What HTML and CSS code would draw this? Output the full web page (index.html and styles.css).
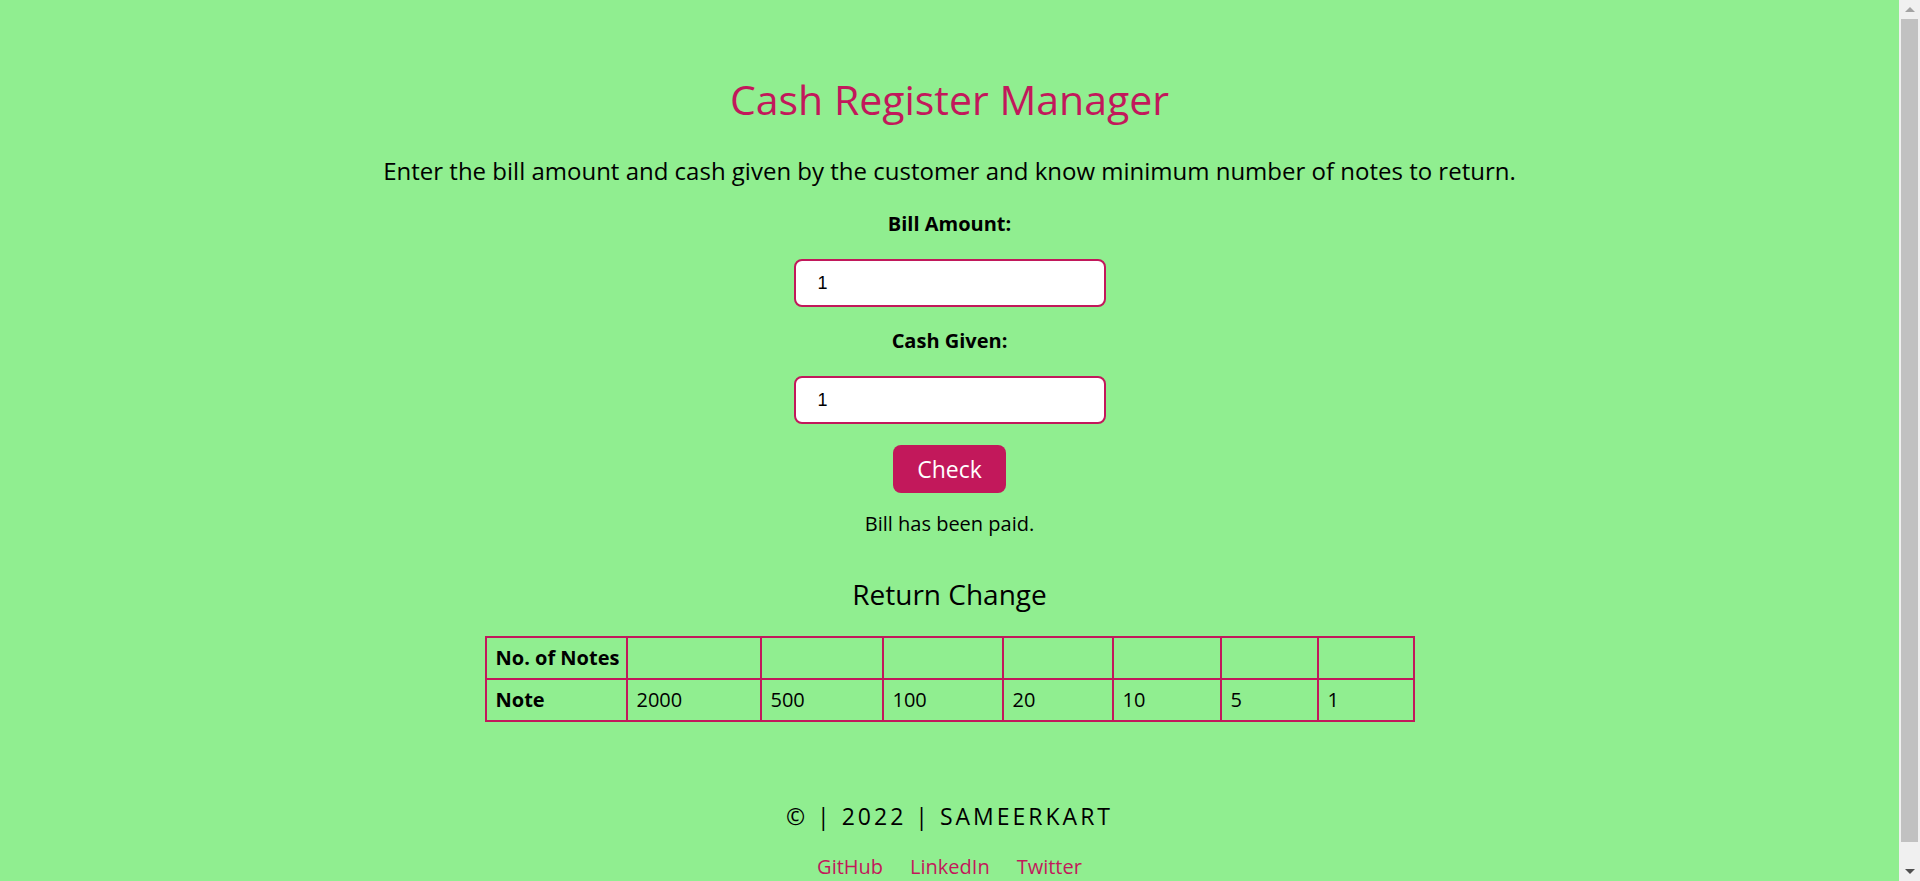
FILE: index.html
```html
<!DOCTYPE html>
<html lang="en">
<head>
    <meta charset="UTF-8">
    <meta name="viewport" content="width=device-width, initial-scale=1.0">
    <title>Cash Register Manager</title>
    <link rel="stylesheet" href="styles.css">
</head>
<body>
    <main class="container">
        <h1 class="title">Cash Register Manager</h1>
        <p class="intro">Enter the bill amount and cash given by the customer and know minimum number of notes to return.</p>

        <label class="label" for="bill-amount">Bill Amount:</label>
        <input class="input" id="bill-amount" type="number" value="1">

        <label class="label label-cash" for="cash-given">Cash Given:</label>
        <input class="input" id="cash-given" type="number" value="1">

        <button class="btn-check" id="check-button">Check</button>

        <p class="message" id="error-message">Bill has been paid.</p>

        <h2 class="sub-title">Return Change</h2>
        <table class="change-table">
            <colgroup>
                <col><col><col><col><col><col><col><col>
            </colgroup>
            <tr>
                <th>No. of Notes</th>
                <td class="no-of-notes"></td>
                <td class="no-of-notes"></td>
                <td class="no-of-notes"></td>
                <td class="no-of-notes"></td>
                <td class="no-of-notes"></td>
                <td class="no-of-notes"></td>
                <td class="no-of-notes"></td>
            </tr>
            <tr>
                <th>Note</th>
                <td>2000</td>
                <td>500</td>
                <td>100</td>
                <td>20</td>
                <td>10</td>
                <td>5</td>
                <td>1</td>
            </tr>
        </table>
    </main>

    <footer class="footer">
        <p class="footer-text">&copy; | 2022 | SAMEERKART</p>
        <ul class="footer-links">
            <li><a class="link" href="#">GitHub</a></li>
            <li><a class="link" href="#">LinkedIn</a></li>
            <li><a class="link" href="#">Twitter</a></li>
        </ul>
    </footer>

    <!-- window scrollbar as seen in the capture -->
    <div class="scrollbar" aria-hidden="true">
        <div class="scrollbar-btn"><span class="arrow-up"></span></div>
        <div class="scrollbar-thumb"></div>
        <div class="scrollbar-btn scrollbar-btn-end"><span class="arrow-down"></span></div>
    </div>
</body>
</html>
```

FILE: styles.css
```css
:root {
    --primary-color: #c2185b;
    --bg-color: #90ee90;
    --text-color: #000000;
}

body {
    margin: 0;
    padding-right: 21px;
    background-color: var(--bg-color);
    color: var(--text-color);
    font-family: 'Open Sans', 'Noto Sans', sans-serif;
}

.container {
    display: flex;
    flex-direction: column;
    align-items: center;
    text-align: center;
}

.title {
    margin: 75px 0 0;
    font-size: 41px;
    line-height: 48px;
    font-weight: 500;
    color: var(--primary-color);
}

.intro {
    margin: 33px 0 0;
    font-size: 24px;
    line-height: 29px;
}

.label {
    display: block;
    margin-top: 27px;
    font-size: 20px;
    line-height: 24px;
    font-weight: 700;
}

.label-cash {
    margin-top: 22px;
}

.input {
    box-sizing: border-box;
    width: 312px;
    height: 48px;
    margin-top: 23px;
    padding: 0 22px;
    border: 2px solid var(--primary-color);
    border-radius: 8px;
    background: #ffffff;
    font-family: 'Liberation Sans', Arial, sans-serif;
    font-size: 18px;
    color: #000000;
    outline: none;
}

.btn-check {
    box-sizing: border-box;
    height: 48px;
    margin-top: 21px;
    padding: 0 24px;
    border: none;
    border-radius: 8px;
    background-color: var(--primary-color);
    color: #ffffff;
    font-family: inherit;
    font-size: 23px;
    cursor: pointer;
}

.message {
    margin: 19px 0 0;
    font-size: 20px;
    line-height: 24px;
}

.sub-title {
    margin: 41px 0 0;
    font-size: 28px;
    line-height: 34px;
    font-weight: 400;
}

.change-table {
    width: 928px;
    margin-top: 25px;
    table-layout: fixed;
    border-collapse: collapse;
    border: 2px solid var(--primary-color);
    text-align: left;
}

.change-table col:nth-child(1) { width: 141px; }
.change-table col:nth-child(2) { width: 134px; }
.change-table col:nth-child(3) { width: 122px; }
.change-table col:nth-child(4) { width: 120px; }
.change-table col:nth-child(5) { width: 110px; }
.change-table col:nth-child(6) { width: 108px; }
.change-table col:nth-child(7) { width: 97px; }
.change-table col:nth-child(8) { width: 96px; }

th, td {
    height: 24px;
    padding: 8px 9px;
    border: 2px solid var(--primary-color);
    font-size: 20px;
    line-height: 24px;
    white-space: nowrap;
}

th {
    font-weight: 700;
}

.footer {
    margin-top: 80px;
    padding-bottom: 48px;
    text-align: center;
}

.footer-text {
    margin: 0;
    font-size: 23px;
    line-height: 29px;
    letter-spacing: 3px;
}

.footer-links {
    display: flex;
    justify-content: center;
    gap: 27px;
    margin: 24px 0 0;
    padding: 0;
    list-style: none;
}

.link {
    font-size: 20px;
    line-height: 24px;
    color: var(--primary-color);
    text-decoration: none;
}

/* scrollbar */
.scrollbar {
    position: fixed;
    top: 0;
    right: 0;
    width: 21px;
    height: 100vh;
    display: flex;
    flex-direction: column;
    align-items: center;
    background: #f0f0f0;
}

.scrollbar-btn {
    height: 19px;
    width: 100%;
    display: flex;
    align-items: center;
    justify-content: center;
}

.scrollbar-btn-end {
    margin-top: auto;
}

.arrow-up,
.arrow-down {
    width: 0;
    height: 0;
    border-left: 5px solid transparent;
    border-right: 5px solid transparent;
}

.arrow-up {
    border-bottom: 5px solid #a3a3a3;
}

.arrow-down {
    border-top: 5px solid #505050;
}

.scrollbar-thumb {
    width: 17px;
    height: 823px;
    background: #c1c1c1;
}
```
